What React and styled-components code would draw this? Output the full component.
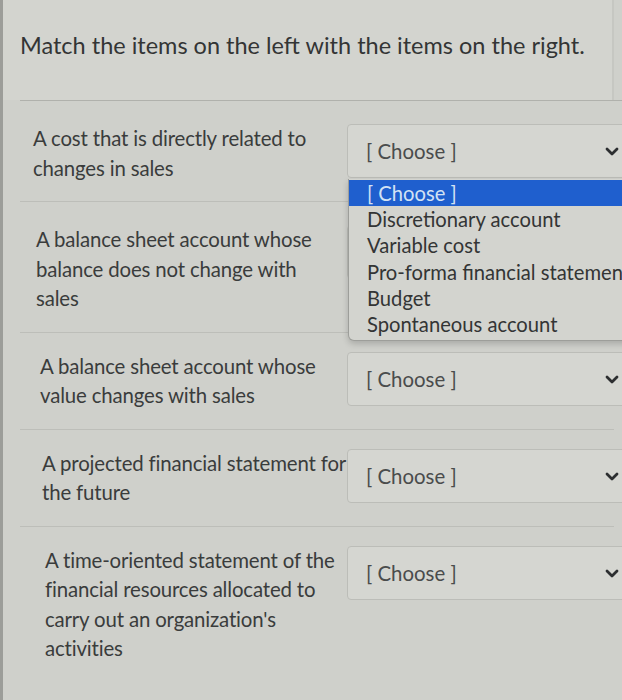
import React from 'react';
import styled, { createGlobalStyle } from 'styled-components';

const GlobalStyle = createGlobalStyle`
  html, body {
    margin: 0;
    padding: 0;
    background: #c9cac5;
  }
  body {
    font-family: Lato, "Open Sans", sans-serif;
    color: #3b3d3d;
  }
`;

const Page = styled.div`
  width: 622px;
  height: 700px;
  overflow: hidden;
  background: #cfd0cb;
  border-left: 3px solid #9c9d99;
  box-sizing: border-box;
`;

const Header = styled.div`
  background: #d3d4cf;
  padding: 30px 0 0 17px;
  height: 100px;
  box-sizing: border-box;
  border-right: 2px solid #c6c7c2;
  width: 611px;
`;

const Title = styled.h1`
  margin: 0;
  font-size: 23.5px;
  font-weight: 400;
  line-height: 30px;
  color: #333535;
  white-space: nowrap;
`;

const List = styled.div`
  border-top: 1.5px solid #b0b1ac;
  margin-left: 17px;
`;

const Row = styled.div`
  display: flex;
  align-items: flex-start;
  position: relative;
  padding: ${p => p.$top}px 0 18px ${p => p.$indent}px;
  border-bottom: ${p => (p.$last ? 'none' : '1.5px solid #bdbeb9')};
  margin-right: 8px;
`;

const Prompt = styled.div`
  width: ${p => 327 - p.$indent}px;
  flex-shrink: 0;
  font-size: 20.4px;
  line-height: 29.5px;
  color: #3a3c3c;
  white-space: nowrap;
  letter-spacing: -0.15px;
`;

const SelectBox = styled.div`
  position: relative;
  flex: 1;
  height: 54px;
  margin-right: -30px;
  box-sizing: border-box;
  border: 1.5px solid #bcbdb8;
  border-radius: 4px;
  background: #d5d6d1;
  display: flex;
  align-items: center;
  padding-left: 18px;
  font-size: 20.4px;
  color: #4a4c4c;
`;

const Chevron = styled.svg`
  position: absolute;
  right: 24px;
  top: 50%;
  margin-top: -4px;
  width: 14px;
  height: 10px;
`;

const Menu = styled.ul`
  position: absolute;
  left: 0;
  top: 54px;
  right: -10px;
  margin: 0;
  padding: 1px 0 3px;
  list-style: none;
  background: #d3d4cf;
  border: 1px solid #9d9e9a;
  border-top: none;
  border-radius: 0 0 6px 6px;
  box-shadow: 0 3px 6px rgba(0, 0, 0, 0.18);
  z-index: 2;
`;

const Option = styled.li`
  font-size: 20.2px;
  line-height: 26.2px;
  padding-left: 18px;
  white-space: nowrap;
  overflow: hidden;
  background: ${p => (p.$active ? '#1f5fce' : 'transparent')};
  color: ${p => (p.$active ? '#d3e2f4' : '#333535')};
`;

const options = [
  '[ Choose ]',
  'Discretionary account',
  'Variable cost',
  'Pro-forma financial statement',
  'Budget',
  'Spontaneous account',
];

const items = [
  { text: ['A cost that is directly related to', 'changes in sales'], open: true, indent: 13, top: 23 },
  { text: ['A balance sheet account whose', 'balance does not change with', 'sales'], indent: 16, top: 23 },
  { text: ['A balance sheet account whose', 'value changes with sales'], indent: 20, top: 19 },
  { text: ['A projected financial statement for', 'the future'], indent: 22, top: 19 },
  {
    text: [
      'A time-oriented statement of the',
      'financial resources allocated to',
      "carry out an organization's",
      'activities',
    ],
    indent: 25,
    top: 19,
  },
];

function Select({ open }) {
  return (
    <SelectBox>
      [ Choose ]
      <Chevron viewBox="0 0 14 10">
        <path d="M2 2 L7 7 L12 2" fill="none" stroke="#2c2e30" strokeWidth="2.8" strokeLinecap="round" strokeLinejoin="round" />
      </Chevron>
      {open && (
        <Menu>
          {options.map((o, i) => (
            <Option key={o} $active={i === 0}>{o}</Option>
          ))}
        </Menu>
      )}
    </SelectBox>
  );
}

export default function App() {
  return (
    <>
      <GlobalStyle />
      <Page>
        <Header>
          <Title>Match the items on the left with the items on the right.</Title>
        </Header>
        <List>
          {items.map((it, i) => (
            <Row key={i} $top={it.top} $indent={it.indent} $last={i === items.length - 1}>
              <Prompt $indent={it.indent}>
                {it.text.map((l, j) => (
                  <React.Fragment key={j}>
                    {l}
                    {j < it.text.length - 1 && <br />}
                  </React.Fragment>
                ))}
              </Prompt>
              <Select open={it.open} />
            </Row>
          ))}
        </List>
      </Page>
    </>
  );
}
